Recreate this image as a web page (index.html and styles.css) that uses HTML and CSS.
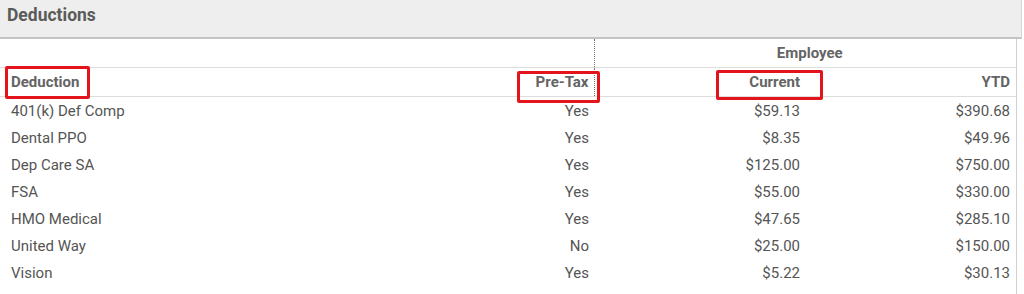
FILE: index.html
```html
<!DOCTYPE html>
<html>
<head>
<meta charset="utf-8">
<link rel="stylesheet" href="styles.css">
</head>
<body>
<div class="panel">
  <div class="title-bar"><h1 class="title">Deductions</h1></div>
  <div class="body">
    <table class="ded-table">
      <colgroup>
        <col class="c-name"><col class="c-pretax"><col class="c-current"><col class="c-ytd">
      </colgroup>
      <thead>
        <tr class="group-row">
          <th class="blank"></th>
          <th class="blank sep"></th>
          <th class="group" colspan="2">Employee</th>
        </tr>
        <tr class="head-row">
          <th class="left">Deduction</th>
          <th class="right sep">Pre-Tax</th>
          <th class="right">Current</th>
          <th class="right ytd">YTD</th>
        </tr>
      </thead>
      <tbody>
        <tr><td>401(k) Def Comp</td><td class="right">Yes</td><td class="right">$59.13</td><td class="right ytd">$390.68</td></tr>
        <tr><td>Dental PPO</td><td class="right">Yes</td><td class="right">$8.35</td><td class="right ytd">$49.96</td></tr>
        <tr><td>Dep Care SA</td><td class="right">Yes</td><td class="right">$125.00</td><td class="right ytd">$750.00</td></tr>
        <tr><td>FSA</td><td class="right">Yes</td><td class="right">$55.00</td><td class="right ytd">$330.00</td></tr>
        <tr><td>HMO Medical</td><td class="right">Yes</td><td class="right">$47.65</td><td class="right ytd">$285.10</td></tr>
        <tr><td>United Way</td><td class="right">No</td><td class="right">$25.00</td><td class="right ytd">$150.00</td></tr>
        <tr><td>Vision</td><td class="right">Yes</td><td class="right">$5.22</td><td class="right ytd">$30.13</td></tr>
      </tbody>
    </table>
    <div class="mark mark-deduction"></div>
    <div class="mark mark-pretax"></div>
    <div class="mark mark-current"></div>
  </div>
</div>
</body>
</html>
```
FILE: styles.css
```css
html, body {
  margin: 0;
  padding: 0;
  background: #ffffff;
}
body {
  font-family: Roboto, "Liberation Sans", sans-serif;
  color: #555555;
}
.panel {
  width: 1022px;
  position: relative;
}
.title-bar {
  height: 37px;
  background: #eeeeee;
  border-bottom: 2px solid #c4c4c4;
  border-right: 1px solid #d6d6d6;
  display: flex;
  align-items: center;
  padding-left: 7px;
}
.title {
  margin: 0;
  font-size: 17.5px;
  font-weight: 700;
  color: #5a5a5a;
  position: relative;
  top: -4px;
}
.body {
  width: 1016px;
  border-right: 1px solid #d0d0d0;
  height: 255px;
  position: relative;
}
.ded-table {
  width: 1016px;
  border-collapse: collapse;
  table-layout: fixed;
  font-size: 15px;
}
.c-name { width: 500px; }
.c-pretax { width: 94px; }
.c-current { width: 211px; }
.c-ytd { width: 211px; }
th {
  font-weight: 700;
  color: #646464;
  padding: 0 5px;
}
.group-row th {
  height: 28px;
  border-bottom: 1px solid #dddddd;
}
.group {
  text-align: center;
  padding-left: 14px;
}
.head-row th {
  height: 28px;
  border-bottom: 1px solid #dddddd;
}
.sep {
  border-right: 1px dotted #777777;
}
.left {
  text-align: left;
  padding-left: 11px;
}
td {
  height: 27px;
  padding: 0 5px 0 11px;
  color: #555555;
  white-space: nowrap;
}
.right {
  text-align: right;
  padding-right: 5px;
}
.ytd {
  padding-right: 6px;
}
.mark {
  position: absolute;
  border: 3px solid #e3141c;
  border-radius: 2px;
  box-sizing: border-box;
}
.mark-deduction {
  left: 5px;
  top: 27px;
  width: 85px;
  height: 33px;
}
.mark-pretax {
  left: 517px;
  top: 32px;
  width: 83px;
  height: 32px;
}
.mark-current {
  left: 716px;
  top: 31px;
  width: 107px;
  height: 30px;
}
```
